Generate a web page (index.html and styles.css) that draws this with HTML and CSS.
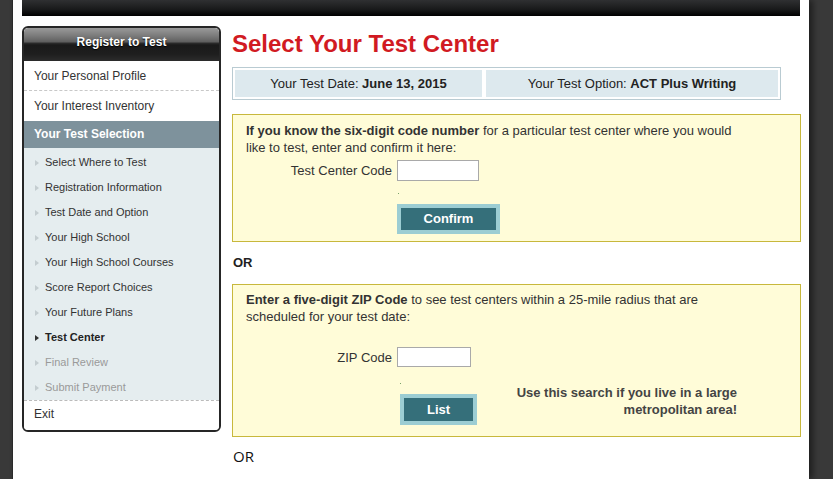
FILE: index.html
```html
<!DOCTYPE html>
<html lang="en">
<head>
<meta charset="utf-8">
<title>Select Your Test Center</title>
<link rel="stylesheet" href="styles.css">
</head>
<body>
<div class="frame">
  <div class="page">
    <div class="topbar"></div>
    <div class="content">
      <nav class="sidebar">
        <div class="sb-head">Register to Test</div>
        <a class="sb-item sb-first" href="#">Your Personal Profile</a>
        <a class="sb-item" href="#">Your Interest Inventory</a>
        <div class="sb-section">Your Test Selection</div>
        <ul class="sb-sub">
          <li><span class="tri"></span>Select Where to Test</li>
          <li><span class="tri"></span>Registration Information</li>
          <li><span class="tri"></span>Test Date and Option</li>
          <li><span class="tri"></span>Your High School</li>
          <li><span class="tri"></span>Your High School Courses</li>
          <li><span class="tri"></span>Score Report Choices</li>
          <li><span class="tri"></span>Your Future Plans</li>
          <li class="current"><span class="tri"></span>Test Center</li>
          <li class="disabled"><span class="tri"></span>Final Review</li>
          <li class="disabled"><span class="tri"></span>Submit Payment</li>
        </ul>
        <a class="sb-item sb-exit" href="#">Exit</a>
      </nav>
      <main class="main">
        <h1 class="title">Select Your Test Center</h1>
        <div class="datebar">
          <div class="cell cell-date"><span>Your Test Date: <b>June 13, 2015</b></span></div>
          <div class="cell cell-opt"><span>Your Test Option: <b>ACT Plus Writing</b></span></div>
        </div>

        <section class="box box-code">
          <p class="intro"><b>If you know the six-digit code number</b> for a particular test center where you would like to test, enter and confirm it here:</p>
          <div class="field">
            <label class="label" for="code">Test Center Code</label>
            <input class="input input-code" id="code" type="text">
          </div>
          <div class="dot dot-code"></div>
          <div class="btn btn-confirm"><span>Confirm</span></div>
        </section>

        <div class="or">OR</div>

        <section class="box box-zip">
          <p class="intro"><b>Enter a five-digit ZIP Code</b> to see test centers within a 25-mile radius that are scheduled for your test date:</p>
          <div class="field field-zip">
            <label class="label" for="zip">ZIP Code</label>
            <input class="input input-zip" id="zip" type="text">
          </div>
          <div class="dot dot-zip"></div>
          <div class="list-row">
            <div class="btn btn-list"><span>List</span></div>
            <p class="note">Use this search if you live in a large metropolitan area!</p>
          </div>
        </section>

        <div class="or2">OR</div>
      </main>
    </div>
  </div>
</div>
</body>
</html>
```

FILE: styles.css
```css
* { box-sizing: border-box; }

html, body {
  margin: 0;
  padding: 0;
  height: 100%;
  overflow: hidden;
}

body {
  background: #393939;
  font-family: "Liberation Sans", Arial, sans-serif;
  color: #333;
}

.frame {
  display: flex;
  height: 100%;
  padding-left: 12px;
}

.page {
  width: 797px;
  height: 100%;
  background: #fff;
  border-left: 1px solid #2a2a2a;
  padding-left: 8px;
  box-shadow: 4px 0 6px rgba(0,0,0,0.45);
  position: relative;
}

.topbar {
  width: 778px;
  height: 16px;
  background: linear-gradient(#2f3032, #18191a 60%, #000);
  margin-left: 1px;
}

.content {
  display: flex;
  align-items: flex-start;
  margin-left: 1px;
  padding-top: 10px;
}

/* Sidebar */
.sidebar {
  width: 199px;
  border: 2px solid #262626;
  border-radius: 6px;
  overflow: hidden;
  background: #fff;
  display: flex;
  flex-direction: column;
}

.sb-head {
  height: 33px;
  color: #fff;
  font-weight: bold;
  font-size: 12px;
  text-align: center;
  line-height: 28px;
  text-shadow: 0 1px 1px #000;
  background:
    linear-gradient(#9a9a9a, #7a7a7a 8px, #5e5e5e 14px, #2e2e2e 15px, #1a1a1a 17px, #1e1e1e 26px, #2c2c2c 33px);
  border-radius: 4px 4px 0 0;
}

.sb-item {
  display: block;
  height: 30px;
  line-height: 30px;
  padding-left: 10px;
  font-size: 12px;
  color: #333;
  text-decoration: none;
  background: #fff;
}

.sb-first {
  border-bottom: 1px dashed #c8c8c8;
}

.sb-section {
  height: 27px;
  line-height: 26px;
  padding-left: 10px;
  background: #7e929c;
  color: #fff;
  font-weight: bold;
  font-size: 12px;
}

.sb-sub {
  list-style: none;
  margin: 0;
  padding: 2px 0 0 0;
  background: #e5edef;
}

.sb-sub li {
  height: 25px;
  line-height: 25px;
  font-size: 11px;
  color: #333;
  display: flex;
  align-items: center;
  padding-left: 11px;
}

.tri {
  width: 0;
  height: 0;
  border-top: 3px solid transparent;
  border-bottom: 3px solid transparent;
  border-left: 4px solid #c4cdd0;
  margin-right: 6px;
}

.sb-sub li.current {
  font-weight: bold;
  color: #222;
}
.sb-sub li.current .tri { border-left-color: #333; }

.sb-sub li.disabled { color: #9a9a9a; }

.sb-exit {
  border-top: 1px dashed #bbb;
  height: 30px;
  line-height: 27px;
}

/* Main */
.main {
  margin-left: 11px;
  width: 569px;
}

.title {
  margin: 4px 0 0 0;
  font-size: 24px;
  line-height: 27px;
  color: #d11a22;
  font-weight: bold;
}

.datebar {
  margin: 10px 0 14px 0;
  width: 549px;
  height: 33px;
  border: 1px solid #b9cbd2;
  padding: 2px;
  display: flex;
  gap: 4px;
}

.cell {
  background: #dde9ee;
  font-size: 13px;
  color: #222;
  display: flex;
  align-items: center;
  justify-content: center;
}
.cell-date { width: 247px; }
.cell-opt { flex: 1; }

.box {
  border: 1px solid #c8b83c;
  background: #fffcd8;
  padding: 7px 13px 7px 13px;
  font-size: 13px;
  color: #333;
}

.intro {
  margin: 0;
  max-width: 500px;
  line-height: 17px;
}

.field {
  display: flex;
  align-items: center;
  margin-top: 4px;
}

.label {
  width: 146px;
  text-align: right;
  margin-right: 5px;
}

.input {
  border: 1px solid #a9a9a9;
  background: #fff;
  padding: 0;
  margin: 0;
  font: inherit;
}
.input-code { width: 82px; height: 21px; }
.input-zip { width: 74px; height: 20px; }

.dot {
  width: 1px;
  height: 1px;
  background: #7aa36a;
}
.dot-code { margin: 12px 0 0 152px; }
.dot-zip { margin: 16px 0 0 154px; }

.btn {
  background: #9ccdd3;
  padding: 4px;
  display: inline-block;
}
.btn span {
  display: block;
  background: #356f7a;
  color: #fff;
  font-weight: bold;
  font-size: 13px;
  text-align: center;
}

.btn-confirm {
  margin: 10px 0 0 151px;
  width: 103px;
  height: 30px;
}
.btn-confirm span { height: 22px; line-height: 22px; }

.box-zip {
  padding: 6px 13px 11px 13px;
}

.field-zip { margin-top: 22px; }

.list-row {
  display: flex;
  align-items: flex-start;
}

.btn-list {
  margin: 10px 0 0 154px;
  width: 77px;
  height: 31px;
}
.btn-list span { height: 23px; line-height: 23px; }

.note {
  margin: 0 0 0 20px;
  width: 240px;
  text-align: right;
  font-weight: bold;
  line-height: 17px;
  color: #444;
}

.or {
  margin: 12px 0 13px 1px;
  font-weight: bold;
  font-size: 13px;
  line-height: 17px;
  color: #222;
}

.or2 {
  margin: 9px 0 0 1px;
  font-family: "Open Sans", "Liberation Sans", sans-serif;
  font-size: 15px;
  line-height: 20px;
  color: #111;
}
```
